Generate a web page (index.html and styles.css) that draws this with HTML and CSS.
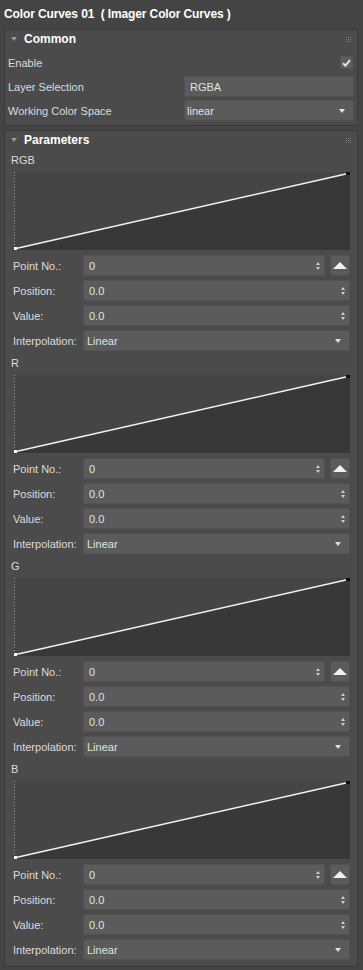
FILE: index.html
```html
<!DOCTYPE html>
<html>
<head>
<meta charset="utf-8">
<link rel="stylesheet" href="styles.css">
</head>
<body>
<div class="title">Color Curves 01&nbsp; ( Imager Color Curves )</div>

<div class="rollout">
  <div class="rh"><span class="tri"></span><span class="rt">Common</span><span class="grip"></span></div>
  <div class="cbody">
    <div class="prow"><span>Enable</span><span class="chk"><svg width="9" height="8" viewBox="0 0 9 8"><path d="M1 4.2 L3.4 6.6 L8 1.2" fill="none" stroke="#e6e6e6" stroke-width="2"/></svg></span></div>
    <div class="prow"><span>Layer Selection</span><span class="field ctext">RGBA</span></div>
    <div class="prow"><span>Working Color Space</span><span class="field cdrop">linear<i class="dd"></i></span></div>
  </div>
</div>

<div class="rollout params">
  <div class="rh"><span class="tri"></span><span class="rt">Parameters</span><span class="grip"></span></div>
  <div class="pbody">
    <div class="section">
      <div class="slabel">RGB</div>
      <svg class="graph" width="336" height="78" viewBox="0 0 336 78"><rect width="336" height="78" fill="#454545"/><polygon points="1,77 334,1 336,1 336,78 0,78" fill="#383838"/><line x1="0.5" y1="0" x2="0.5" y2="76" stroke="#9a9a9a" stroke-dasharray="1 2"/><line x1="2" y1="76.5" x2="334" y2="1.5" stroke="#f2f2f2" stroke-width="1.5"/><rect x="0" y="75" width="3" height="3" fill="#fff"/><rect x="332" y="0" width="4" height="3" fill="#111"/></svg>
      <div class="rows">
        <span class="rl">Point No.:</span><div class="pn"><span class="field spin">0<i class="sp"></i></span><span class="btn"><i class="up"></i></span></div>
        <span class="rl">Position:</span><span class="field spin">0.0<i class="sp"></i></span>
        <span class="rl">Value:</span><span class="field spin">0.0<i class="sp"></i></span>
        <span class="rl">Interpolation:</span><span class="field drop">Linear<i class="dd"></i></span>
      </div>
    </div>
    <div class="section">
      <div class="slabel">R</div>
      <svg class="graph" width="336" height="78" viewBox="0 0 336 78"><rect width="336" height="78" fill="#454545"/><polygon points="1,77 334,1 336,1 336,78 0,78" fill="#383838"/><line x1="0.5" y1="0" x2="0.5" y2="76" stroke="#9a9a9a" stroke-dasharray="1 2"/><line x1="2" y1="76.5" x2="334" y2="1.5" stroke="#f2f2f2" stroke-width="1.5"/><rect x="0" y="75" width="3" height="3" fill="#fff"/><rect x="332" y="0" width="4" height="3" fill="#111"/></svg>
      <div class="rows">
        <span class="rl">Point No.:</span><div class="pn"><span class="field spin">0<i class="sp"></i></span><span class="btn"><i class="up"></i></span></div>
        <span class="rl">Position:</span><span class="field spin">0.0<i class="sp"></i></span>
        <span class="rl">Value:</span><span class="field spin">0.0<i class="sp"></i></span>
        <span class="rl">Interpolation:</span><span class="field drop">Linear<i class="dd"></i></span>
      </div>
    </div>
    <div class="section">
      <div class="slabel">G</div>
      <svg class="graph" width="336" height="78" viewBox="0 0 336 78"><rect width="336" height="78" fill="#454545"/><polygon points="1,77 334,1 336,1 336,78 0,78" fill="#383838"/><line x1="0.5" y1="0" x2="0.5" y2="76" stroke="#9a9a9a" stroke-dasharray="1 2"/><line x1="2" y1="76.5" x2="334" y2="1.5" stroke="#f2f2f2" stroke-width="1.5"/><rect x="0" y="75" width="3" height="3" fill="#fff"/><rect x="332" y="0" width="4" height="3" fill="#111"/></svg>
      <div class="rows">
        <span class="rl">Point No.:</span><div class="pn"><span class="field spin">0<i class="sp"></i></span><span class="btn"><i class="up"></i></span></div>
        <span class="rl">Position:</span><span class="field spin">0.0<i class="sp"></i></span>
        <span class="rl">Value:</span><span class="field spin">0.0<i class="sp"></i></span>
        <span class="rl">Interpolation:</span><span class="field drop">Linear<i class="dd"></i></span>
      </div>
    </div>
    <div class="section">
      <div class="slabel">B</div>
      <svg class="graph" width="336" height="78" viewBox="0 0 336 78"><rect width="336" height="78" fill="#454545"/><polygon points="1,77 334,1 336,1 336,78 0,78" fill="#383838"/><line x1="0.5" y1="0" x2="0.5" y2="76" stroke="#9a9a9a" stroke-dasharray="1 2"/><line x1="2" y1="76.5" x2="334" y2="1.5" stroke="#f2f2f2" stroke-width="1.5"/><rect x="0" y="75" width="3" height="3" fill="#fff"/><rect x="332" y="0" width="4" height="3" fill="#111"/></svg>
      <div class="rows">
        <span class="rl">Point No.:</span><div class="pn"><span class="field spin">0<i class="sp"></i></span><span class="btn"><i class="up"></i></span></div>
        <span class="rl">Position:</span><span class="field spin">0.0<i class="sp"></i></span>
        <span class="rl">Value:</span><span class="field spin">0.0<i class="sp"></i></span>
        <span class="rl">Interpolation:</span><span class="field drop">Linear<i class="dd"></i></span>
      </div>
    </div>
  </div>
</div>
</body>
</html>
```

FILE: styles.css
```css
html, body {
  margin: 0;
  padding: 0;
}
body {
  background: #444444;
  width: 363px;
  height: 970px;
  overflow: hidden;
  font-family: "Liberation Sans", Arial, sans-serif;
  font-size: 11px;
  color: #dddddd;
}
.title {
  height: 29px;
  line-height: 28px;
  padding-left: 4px;
  font-weight: bold;
  font-size: 12px;
  letter-spacing: -0.12px;
  color: #ffffff;
  white-space: pre;
}
.rollout {
  margin: 0 5px 0 4px;
  background: #4b4b4b;
  border: 1px solid #3a3a3a;
  border-radius: 2px;
}
.params {
  margin-top: 4px;
}
.rh {
  height: 18px;
  display: flex;
  align-items: center;
  padding: 0 6px;
}
.tri {
  width: 0;
  height: 0;
  border-left: 3px solid transparent;
  border-right: 3px solid transparent;
  border-top: 4px solid #9a9a9a;
  margin-right: 7px;
}
.rt {
  font-weight: bold;
  font-size: 12px;
  color: #ffffff;
}
.grip {
  margin-left: auto;
  width: 5px;
  height: 5px;
  position: relative;
}
.grip::before {
  content: "";
  position: absolute;
  left: 0;
  top: 0;
  width: 1px;
  height: 1px;
  background: #808080;
  box-shadow: 2px 0 #808080, 4px 0 #808080, 0 2px #808080, 2px 2px #808080, 4px 2px #808080, 0 4px #808080, 2px 4px #808080, 4px 4px #808080;
}
.cbody {
  padding: 4px 3px 4px 3px;
  display: flex;
  flex-direction: column;
  gap: 3px;
}
.prow {
  height: 21px;
  display: flex;
  align-items: center;
  justify-content: space-between;
}
.chk {
  width: 13px;
  height: 13px;
  margin-right: 1px;
  background: #5e5e5e;
  border: 1px solid #555;
  box-sizing: border-box;
  display: flex;
  align-items: center;
  justify-content: center;
}
.field {
  box-sizing: border-box;
  height: 21px;
  background: #5b5b5b;
  border: 1px solid #525252;
  border-radius: 2px;
  display: flex;
  align-items: center;
  color: #e2e2e2;
  position: relative;
}
.ctext {
  width: 170px;
  padding-left: 5px;
}
.cdrop {
  width: 170px;
  padding-left: 2px;
}
.pbody {
  padding: 3px 7px 2px 9px;
}
.section {
  padding-bottom: 4px;
}
.slabel {
  height: 16px;
  line-height: 16px;
  margin-left: -3px;
}
.graph {
  display: block;
  margin-top: 4px;
}
.rows {
  margin-top: 5px;
  display: grid;
  grid-template-columns: 69px 1fr;
  grid-auto-rows: 21px;
  row-gap: 4px;
  align-items: center;
}
.rl {
  margin-left: -1px;
}
.pn {
  display: flex;
  gap: 5px;
}
.pn .field {
  flex: 1;
}
.spin {
  padding-left: 5px;
}
.drop {
  padding-left: 3px;
}
.btn {
  width: 20px;
  height: 21px;
  box-sizing: border-box;
  background: #5b5b5b;
  border: 1px solid #525252;
  border-radius: 3px;
  display: flex;
  align-items: center;
  justify-content: center;
}
.up {
  width: 0;
  height: 0;
  border-left: 7px solid transparent;
  border-right: 7px solid transparent;
  border-bottom: 7px solid #f0f0f0;
}
.sp {
  position: absolute;
  right: 3px;
  top: 6px;
  width: 5px;
  height: 8px;
}
.sp::before, .sp::after {
  content: "";
  position: absolute;
  left: 0;
  width: 0;
  height: 0;
  border-left: 2.5px solid transparent;
  border-right: 2.5px solid transparent;
}
.sp::before {
  top: 0;
  border-bottom: 3px solid #cfcfcf;
}
.sp::after {
  top: 5px;
  border-top: 3px solid #cfcfcf;
}
.dd {
  position: absolute;
  right: 8px;
  top: 8px;
  width: 0;
  height: 0;
  border-left: 3px solid transparent;
  border-right: 3px solid transparent;
  border-top: 4px solid #e0e0e0;
}
```
